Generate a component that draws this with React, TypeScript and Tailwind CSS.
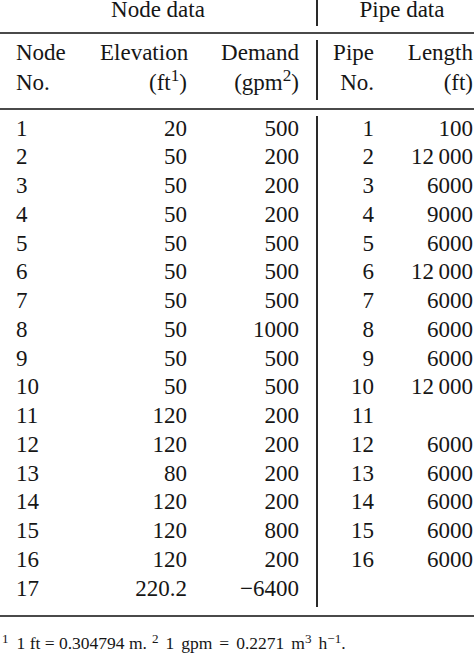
const nodes = [
  { no: "1", elev: "20", demand: "500" },
  { no: "2", elev: "50", demand: "200" },
  { no: "3", elev: "50", demand: "200" },
  { no: "4", elev: "50", demand: "200" },
  { no: "5", elev: "50", demand: "500" },
  { no: "6", elev: "50", demand: "500" },
  { no: "7", elev: "50", demand: "500" },
  { no: "8", elev: "50", demand: "1000" },
  { no: "9", elev: "50", demand: "500" },
  { no: "10", elev: "50", demand: "500" },
  { no: "11", elev: "120", demand: "200" },
  { no: "12", elev: "120", demand: "200" },
  { no: "13", elev: "80", demand: "200" },
  { no: "14", elev: "120", demand: "200" },
  { no: "15", elev: "120", demand: "800" },
  { no: "16", elev: "120", demand: "200" },
  { no: "17", elev: "220.2", demand: "\u22126400" },
];

const pipes = [
  { no: "1", length: "100" },
  { no: "2", length: "12\u2009000" },
  { no: "3", length: "6000" },
  { no: "4", length: "9000" },
  { no: "5", length: "6000" },
  { no: "6", length: "12\u2009000" },
  { no: "7", length: "6000" },
  { no: "8", length: "6000" },
  { no: "9", length: "6000" },
  { no: "10", length: "12\u2009000" },
  { no: "11", length: "" },
  { no: "12", length: "6000" },
  { no: "13", length: "6000" },
  { no: "14", length: "6000" },
  { no: "15", length: "6000" },
  { no: "16", length: "6000" },
];

function Divider({ className }: { className: string }) {
  return <div className={`w-[1.5px] shrink-0 bg-[#2a2a2a] ${className}`} />;
}

export default function App() {
  return (
    <div className="w-[474px] h-[657px] overflow-hidden bg-white text-[#161616] font-['Liberation_Serif','Times_New_Roman',serif] text-[23px]">
      {/* group headers */}
      <div className="flex h-[32px]">
        <div className="w-[316px] shrink-0 text-center leading-[20px]">Node data</div>
        <Divider className="h-[26px]" />
        <div className="w-[169px] shrink-0 text-center leading-[20px]">Pipe data</div>
      </div>
      <div className="h-[2px] bg-[#4a4a4a]" />

      {/* column headers */}
      <div className="flex pt-[4px] pb-[10px] leading-[30px]">
        <div className="flex w-[316px] shrink-0">
          <div className="w-[100px] pl-[16px]">
            <div>Node</div>
            <div>No.</div>
          </div>
          <div className="w-[87px] text-right">
            <div>Elevation</div>
            <div>
              (ft<sup>1</sup>)
            </div>
          </div>
          <div className="w-[112px] text-right">
            <div>Demand</div>
            <div>
              (gpm<sup>2</sup>)
            </div>
          </div>
        </div>
        <Divider className="mt-[2px] mb-[-2px]" />
        <div className="flex">
          <div className="w-[56.5px] text-right">
            <div>Pipe</div>
            <div>No.</div>
          </div>
          <div className="w-[99px] text-right">
            <div>Length</div>
            <div>(ft)</div>
          </div>
        </div>
      </div>
      <div className="h-[1.5px] bg-[#4a4a4a]" />

      {/* data rows */}
      <div className="flex pt-[5px] pb-[12px] leading-[28.75px]">
        <div className="w-[316px] shrink-0">
          {nodes.map((n) => (
            <div key={n.no} className="flex">
              <div className="w-[100px] pl-[16px]">{n.no}</div>
              <div className="w-[87px] text-right">{n.elev}</div>
              <div className="w-[112px] text-right">{n.demand}</div>
            </div>
          ))}
        </div>
        <Divider className="mt-[1px] mb-[-4px]" />
        <div>
          {pipes.map((p) => (
            <div key={p.no} className="flex">
              <div className="w-[56.5px] text-right">{p.no}</div>
              <div className="w-[99px] text-right">{p.length}</div>
            </div>
          ))}
        </div>
      </div>
      <div className="h-[2px] bg-[#4a4a4a]" />

      {/* footnote */}
      <div className="pt-[16px] pl-[2px] text-[17.5px] leading-[20px] whitespace-nowrap">
        <sup>1</sup>
        <span className="ml-[8px]">1 ft = 0.304794 m.</span>
        <sup className="ml-[5px]">2</sup>
        <span className="ml-[7px] [word-spacing:2.6px]">
          1 gpm = 0.2271 m<sup>3</sup> h<sup>{"\u2212"}1</sup>.
        </span>
      </div>
    </div>
  );
}
